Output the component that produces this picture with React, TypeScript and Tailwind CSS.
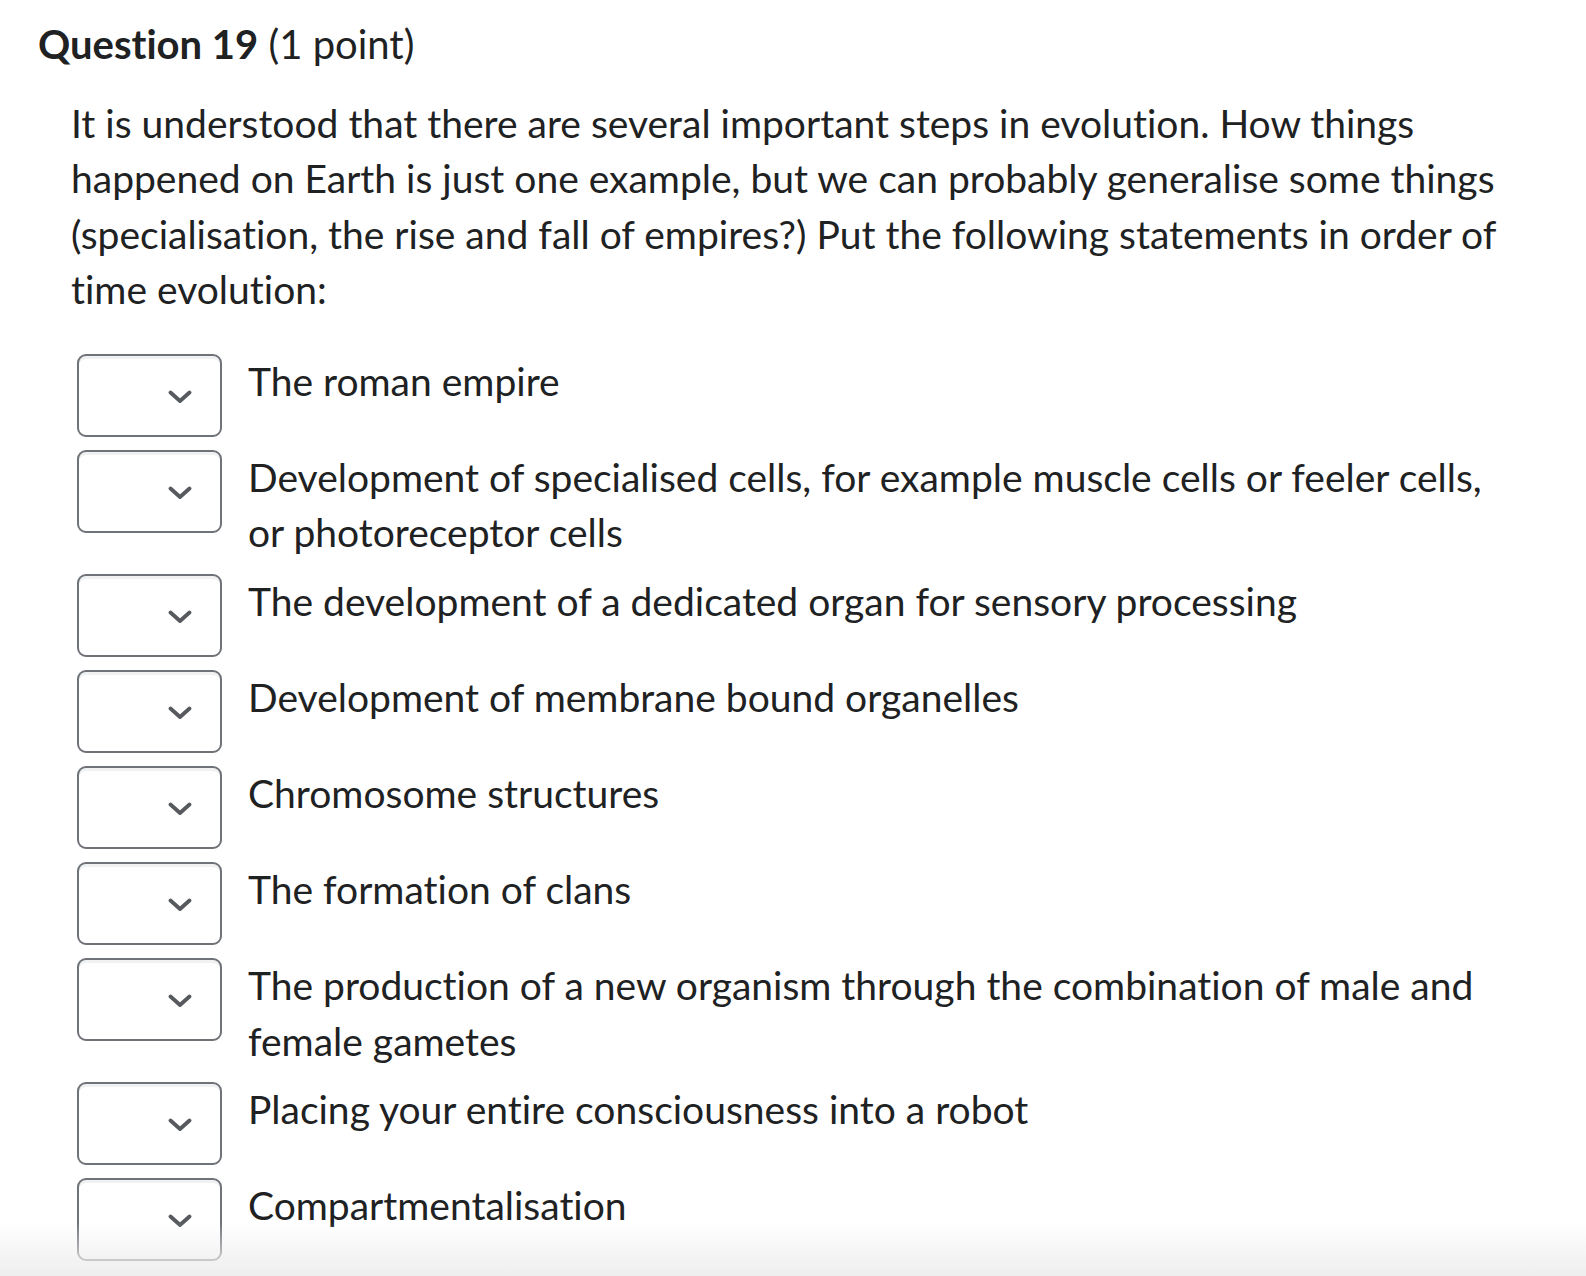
import React from "react";

const items: string[] = [
  "The roman empire",
  "Development of specialised cells, for example muscle cells or feeler cells, or photoreceptor cells",
  "The development of a dedicated organ for sensory processing",
  "Development of membrane bound organelles",
  "Chromosome structures",
  "The formation of clans",
  "The production of a new organism through the combination of male and female gametes",
  "Placing your entire consciousness into a robot",
  "Compartmentalisation",
];

function SelectBox() {
  return (
    <div className="relative w-[145px] h-[83px] shrink-0 rounded-[9px] border-2 border-[#6f7378] bg-white shadow-[inset_0_3px_0_#f0f1f2]">
      <svg
        className="absolute left-[89px] top-[34px]"
        width="24"
        height="14"
        viewBox="0 0 24 14"
        fill="none"
      >
        <path d="M2.5 2.5 L12 11 L21.5 2.5" stroke="#565a5e" strokeWidth="3.8" strokeLinecap="round" strokeLinejoin="round" />
      </svg>
    </div>
  );
}

export default function App() {
  return (
    <div
      className="relative min-h-[1276px] bg-white text-[#202122] pl-[38px] pt-[17px] [font-variant-ligatures:none]"
      style={{ fontFamily: "Lato, 'Open Sans', sans-serif" }}
    >
      <h1 className="text-[40px] leading-[55.5px] font-normal m-0">
        <span className="font-bold">Question 19</span> (1 point)
      </h1>
      <div className="ml-[33px] w-[1440px] mt-[23px]">
        <p className="text-[39px] leading-[55.6px] m-0">
          It is understood that there are several important steps in evolution. How things happened on Earth is just one example, but we can probably generalise some things (specialisation, the rise and fall of empires?) Put the following statements in order of time evolution:
        </p>
        <div className="mt-[36px] ml-[6px] flex flex-col">
          {items.map((t, i) => (
            <div key={i} className="flex items-start gap-[26px] mb-[13px]">
              <SelectBox />
              <div className="text-[39px] leading-[55.6px] w-[1262px]">{t}</div>
            </div>
          ))}
        </div>
      </div>
      <div className="fixed left-0 right-0 bottom-0 h-[54px] bg-gradient-to-b from-white/0 to-[#eeeeee] pointer-events-none" />
    </div>
  );
}
